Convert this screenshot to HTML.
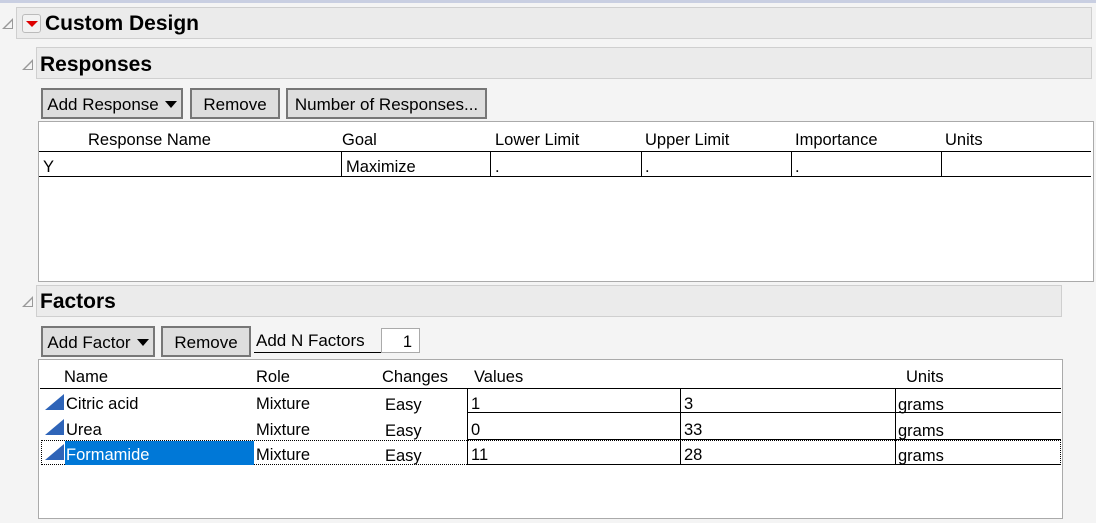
<!DOCTYPE html>
<html><head><style>
*{margin:0;padding:0;box-sizing:border-box}
body{width:1096px;height:523px;background:#f4f4f4;font-family:"Liberation Sans",sans-serif;font-size:16.5px;color:#000;position:relative;overflow:hidden}
.a{position:absolute;white-space:nowrap}
.hdr{position:absolute;background:#ebebeb;border:1px solid #cfcfcf}
.ht{position:absolute;font-weight:bold;font-size:21px}
.tri{position:absolute;width:0;height:0;border-left:11px solid transparent;border-bottom:11px solid #999}
.tri:after{content:"";position:absolute;left:-8px;top:3px;border-left:7px solid transparent;border-bottom:7px solid #f4f4f4}
.btn{position:absolute;background:#dedede;border:2px solid #777;height:31px;line-height:29px;text-align:center;font-size:17px}
.dd{display:inline-block;width:0;height:0;border-left:6px solid transparent;border-right:6px solid transparent;border-top:7px solid #000;vertical-align:middle;margin-left:6px;margin-top:-3px}
.tbl{position:absolute;background:#fff;border:1px solid #aaa}
.hl{position:absolute;height:2px;background:#000}
.vl{position:absolute;width:1px;background:#000}
.ic{position:absolute;width:0;height:0;border-left:19px solid transparent;border-bottom:16px solid #2e64b8}
</style></head><body>
<div class="a" style="left:0;top:0;width:1096px;height:3px;background:#c9cfe2"></div>

<div class="hdr" style="left:16px;top:7px;width:1076px;height:32px"></div>
<div class="tri" style="left:2px;top:18px"></div>
<div class="a" style="left:22px;top:14px;width:19px;height:19px;border:1px solid #bbb;border-radius:3px;background:#f2f2f2"></div>
<div class="a" style="left:26px;top:21px;border-left:6px solid transparent;border-right:6px solid transparent;border-top:6px solid #d00"></div>
<div class="ht" style="left:45px;top:12px">Custom Design</div>

<div class="hdr" style="left:36px;top:47px;width:1056px;height:32px"></div>
<div class="tri" style="left:22px;top:59px"></div>
<div class="ht" style="left:40px;top:53px">Responses</div>

<div class="btn" style="left:41px;top:88px;width:142px">Add Response<span class="dd"></span></div>
<div class="btn" style="left:190px;top:88px;width:90px">Remove</div>
<div class="btn" style="left:286px;top:88px;width:201px">Number of Responses...</div>

<div class="tbl" style="left:38px;top:121px;width:1056px;height:161px"></div>
<div class="a" style="left:88px;top:131px">Response Name</div>
<div class="a" style="left:342px;top:131px">Goal</div>
<div class="a" style="left:495px;top:131px">Lower Limit</div>
<div class="a" style="left:645px;top:131px">Upper Limit</div>
<div class="a" style="left:795px;top:131px">Importance</div>
<div class="a" style="left:945px;top:131px">Units</div>
<div class="hl" style="left:39px;top:151px;width:1052px;height:1px"></div>
<div class="hl" style="left:39px;top:176px;width:1052px;height:1px"></div>
<div class="a" style="left:341px;top:152px;width:150px;height:25px;border:1px solid #000;border-top:none"></div>
<div class="vl" style="left:641px;top:152px;height:25px"></div>
<div class="vl" style="left:791px;top:152px;height:25px"></div>
<div class="vl" style="left:941px;top:152px;height:25px"></div>
<div class="a" style="left:43px;top:158px">Y</div>
<div class="a" style="left:346px;top:158px">Maximize</div>
<div class="a" style="left:495px;top:158px">.</div>
<div class="a" style="left:645px;top:158px">.</div>
<div class="a" style="left:795px;top:158px">.</div>

<div class="hdr" style="left:36px;top:285px;width:1026px;height:32px"></div>
<div class="tri" style="left:22px;top:296px"></div>
<div class="ht" style="left:40px;top:290px">Factors</div>

<div class="btn" style="left:41px;top:326px;width:114px">Add Factor<span class="dd"></span></div>
<div class="btn" style="left:161px;top:326px;width:90px">Remove</div>
<div class="a" style="left:256px;top:331px;font-size:17px">Add N Factors</div>
<div class="a" style="left:254px;top:352px;width:127px;height:1px;background:#000"></div>
<div class="a" style="left:381px;top:328px;width:39px;height:25px;background:#fff;border:1px solid #aaa;text-align:right;padding-right:7px;line-height:26px">1</div>

<div class="tbl" style="left:38px;top:359px;width:1025px;height:160px"></div>
<div class="a" style="left:64px;top:368px">Name</div>
<div class="a" style="left:256px;top:368px">Role</div>
<div class="a" style="left:382px;top:368px">Changes</div>
<div class="a" style="left:474px;top:368px">Values</div>
<div class="a" style="left:906px;top:368px">Units</div>
<div class="hl" style="left:40px;top:388px;width:1021px;height:1px"></div>

<div class="vl" style="left:467px;top:389px;height:76px"></div>
<div class="vl" style="left:680px;top:389px;height:76px"></div>
<div class="vl" style="left:895px;top:389px;height:76px"></div>
<div class="hl" style="left:467px;top:412px;width:594px;height:1px"></div>
<div class="hl" style="left:467px;top:439px;width:594px;height:1px"></div>
<div class="hl" style="left:467px;top:464px;width:594px;height:1px"></div>
<div class="a" style="left:41px;top:440px;width:1020px;height:25px;border:1px dotted #000"></div>
<div class="a" style="left:65px;top:441px;width:189px;height:24px;background:#0078d7"></div>

<div class="ic" style="left:45px;top:394px"></div>
<div class="ic" style="left:45px;top:419px"></div>
<div class="ic" style="left:45px;top:444px"></div>

<div class="a" style="left:66px;top:395px">Citric acid</div>
<div class="a" style="left:256px;top:395px">Mixture</div>
<div class="a" style="left:385px;top:396px">Easy</div>
<div class="a" style="left:471px;top:395px">1</div>
<div class="a" style="left:684px;top:395px">3</div>
<div class="a" style="left:898px;top:396px">grams</div>

<div class="a" style="left:66px;top:421px">Urea</div>
<div class="a" style="left:256px;top:421px">Mixture</div>
<div class="a" style="left:385px;top:422px">Easy</div>
<div class="a" style="left:471px;top:421px">0</div>
<div class="a" style="left:684px;top:421px">33</div>
<div class="a" style="left:898px;top:422px">grams</div>

<div class="a" style="left:66px;top:446px;color:#fff">Formamide</div>
<div class="a" style="left:256px;top:446px">Mixture</div>
<div class="a" style="left:385px;top:447px">Easy</div>
<div class="a" style="left:471px;top:446px">11</div>
<div class="a" style="left:684px;top:446px">28</div>
<div class="a" style="left:898px;top:447px">grams</div>
</body></html>
